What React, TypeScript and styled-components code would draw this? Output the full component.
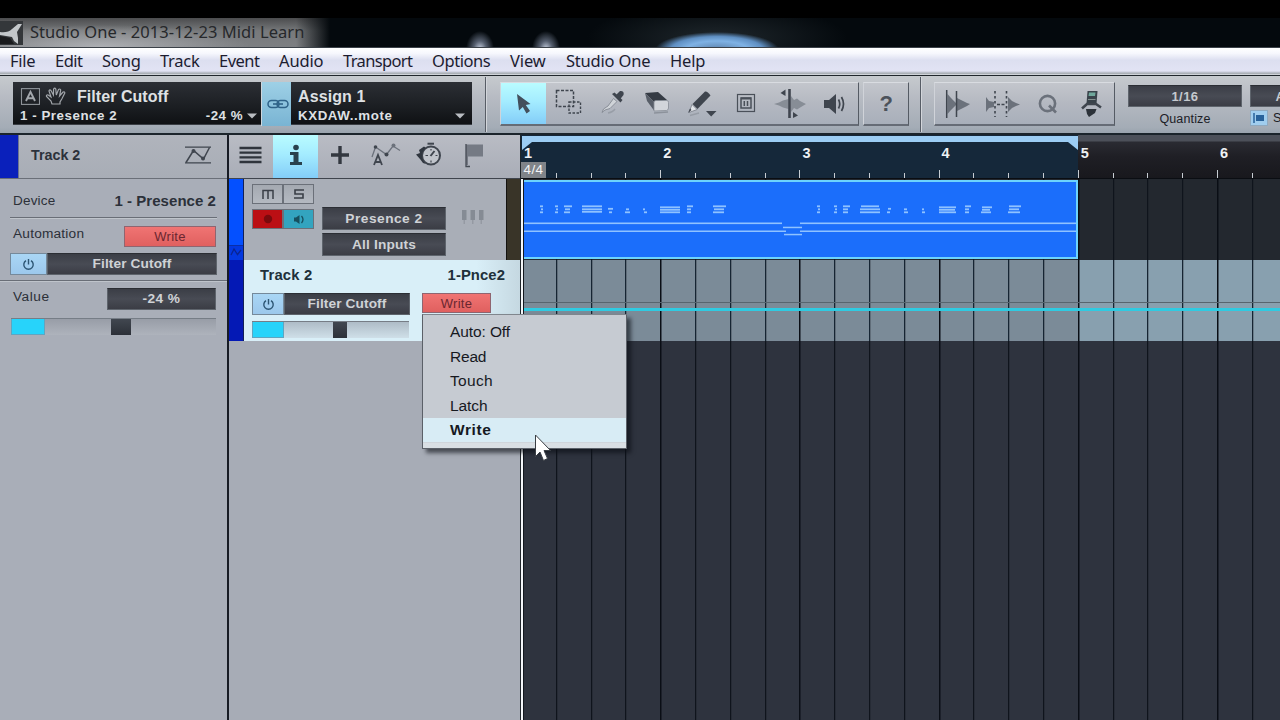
import React from "react";
import styled, { createGlobalStyle, css } from "styled-components";

const Global = createGlobalStyle`
  *, *::before, *::after { box-sizing: border-box; }
  html, body { margin: 0; padding: 0; background: #000; overflow: hidden; }
  body { font-family: "Liberation Sans", Arial, sans-serif; }
  svg { display: block; flex: none; }
`;

const BEAT = 34.8;

const Screen = styled.div`
  position: relative;
  width: 1280px;
  height: 720px;
  padding-top: 18px;
  display: flex;
  flex-direction: column;
  overflow: hidden;
  background: #000;
`;

const Label = styled.span<{ $size: number; $bold?: boolean; $color?: string; $track?: number; $raise?: number }>`
  font-size: ${(p) => p.$size}px;
  font-weight: ${(p) => (p.$bold ? 700 : 400)};
  color: ${(p) => p.$color ?? "#23282f"};
  letter-spacing: ${(p) => p.$track ?? 0}px;
  padding-bottom: ${(p) => p.$raise ?? 0}px;
  line-height: 1;
  white-space: nowrap;
`;

/* ---------- window title and menu ---------- */

const TitleBar = styled.header`
  height: 29px;
  flex: none;
  display: flex;
  align-items: center;
  background:
    radial-gradient(ellipse 14px 18px at 480px 31px, #c9d2e2 0%, rgba(140, 152, 175, 0.6) 45%, transparent 100%),
    radial-gradient(ellipse 14px 18px at 546px 31px, #c9d2e2 0%, rgba(140, 152, 175, 0.6) 45%, transparent 100%),
    radial-gradient(ellipse 62px 18px at 717px 32px, #5a7fa8 0%, #7fb2e4 50%, #5f8fc2 75%, transparent 100%),
    radial-gradient(ellipse 130px 34px at 717px 20px, #1f272c 0%, transparent 100%),
    linear-gradient(90deg, transparent 0 296px, #04090d 330px),
    linear-gradient(90deg, transparent 60%, rgba(30, 36, 38, 0.6) 100%),
    radial-gradient(ellipse 150px 22px at 100px 29px, rgba(190, 192, 196, 0.75), transparent 100%),
    linear-gradient(180deg, #4b4c4e 0%, #77797b 45%, #7d7f82 100%);
`;

const TitleText = styled.h1`
  margin: 0 0 0 7px;
  padding-bottom: 0;
  font: 400 16.5px/1 "Noto Sans", sans-serif;
  letter-spacing: 0.05px;
  color: #26282b;
  white-space: nowrap;
`;

const MenuBar = styled.nav`
  height: 29px;
  flex: none;
  display: flex;
  align-items: center;
  padding-left: 10px;
  padding-bottom: 1px;
  border-top: 1px solid #3b4148;
  border-bottom: 1px solid #20262b;
  background: linear-gradient(180deg, #fff 0%, #f6f7fd 20%, #dcdff0 45%, #e2e3f4 85%, #a6acb2 94%, #e2e5ea 100%);
`;

const MenuItem = styled.a<{ $w: number; $track: number }>`
  width: ${(p) => p.$w}px;
  margin-right: 20px;
  font: 400 16.5px/1 "Noto Sans", sans-serif;
  letter-spacing: ${(p) => p.$track}px;
  color: #1c1c30;
  white-space: nowrap;
`;

/* ---------- toolbar ---------- */

const ToolBar = styled.section`
  height: 59px;
  flex: none;
  display: flex;
  align-items: flex-start;
  padding: 6px 0 0 13px;
  border-bottom: 2px solid #1b242b;
  background: linear-gradient(180deg, #c6cace 0%, #b6bac2 40%, #a4acb6 90%, #9aa4ae 100%);
`;

const Display = styled.div<{ $w: number }>`
  width: ${(p) => p.$w}px;
  height: 43px;
  flex: none;
  padding: 6px 4px 0 7px;
  display: flex;
  flex-direction: column;
  gap: 4px;
  background: linear-gradient(180deg, #2c2f35 0%, #1b1e22 60%, #0f1114 100%);
  border-bottom: 1px solid #3a3e44;
`;

const DisplayRow = styled.div<{ $gap?: number; $tall?: boolean }>`
  height: ${(p) => (p.$tall ? 17 : 14)}px;
  display: flex;
  align-items: center;
  gap: ${(p) => p.$gap ?? 0}px;
`;

const Push = styled.span`
  flex: 1;
`;

const Space = styled.i<{ $w: number }>`
  width: ${(p) => p.$w}px;
  flex: none;
`;

const LinkButton = styled.button`
  width: 30px;
  height: 44px;
  flex: none;
  padding: 0 0 0 2px;
  border: 0;
  border-left: 1px solid #cfd6dc;
  display: flex;
  align-items: center;
  justify-content: center;
  background: linear-gradient(180deg, #9ed0e6, #79b4d3);
`;

const BarRule = styled.i<{ $l: number; $r: number }>`
  width: 2px;
  height: 55px;
  flex: none;
  margin: -5px ${(p) => p.$r}px 0 ${(p) => p.$l}px;
  border-left: 1px solid #575d66;
  border-right: 1px solid #d3d6db;
`;

const ToolGroup = styled.div<{ $w: number; $ml?: number }>`
  width: ${(p) => p.$w}px;
  height: 44px;
  margin-left: ${(p) => p.$ml ?? 0}px;
  flex: none;
  display: flex;
  border-top: 1px solid #d9dce1;
  border-left: 1px solid #d0d3d9;
  border-right: 1px solid #555b64;
  border-bottom: 2px solid #666c76;
  background: linear-gradient(180deg, #c3c6cc 0%, #b4b8c1 50%, #a8afba 100%);
`;

const Tool = styled.button<{ $active?: boolean; $w?: number; $lift?: number }>`
  width: ${(p) => p.$w ?? 44.4}px;
  flex: none;
  height: 100%;
  padding: 0 0 ${(p) => p.$lift ?? 0}px;
  border: 0;
  display: flex;
  align-items: center;
  justify-content: center;
  background: ${(p) => (p.$active ? "linear-gradient(180deg, #b9fcff 0%, #a4ecff 45%, #83cdf8 100%)" : "transparent")};
`;

const QuantizeBlock = styled.div`
  width: 114px;
  margin-left: 13px;
  flex: none;
  display: flex;
  flex-direction: column;
  align-items: center;
  gap: 6px;
  padding-top: 3px;
`;

const DarkField = styled.div<{ $w: number; $h: number }>`
  width: ${(p) => p.$w}px;
  height: ${(p) => p.$h}px;
  flex: none;
  display: flex;
  align-items: center;
  justify-content: center;
  border: 1px solid #5e646c;
  border-top-color: #2b2e34;
  background: linear-gradient(180deg, #3b3e46 0%, #484b54 50%, #3b3d45 100%);
`;

const SnapBlock = styled(QuantizeBlock)`
  width: 106px;
  margin-left: 8px;
  gap: 3px;
  align-items: flex-start;
`;

const SnapRow = styled.div`
  display: flex;
  align-items: center;
  gap: 5px;
`;

const SnapToggle = styled.i`
  width: 18px;
  height: 16px;
  display: flex;
  align-items: center;
  justify-content: center;
  border: 1px solid #8fa9bf;
  background: #a0cdee;
`;

/* ---------- body ---------- */

const Body = styled.main`
  flex: 1;
  display: flex;
  min-height: 0;
`;

const Inspector = styled.aside`
  width: 229px;
  flex: none;
  border-right: 2px solid #171b24;
  background: #a9aeb8;
`;

const InspectorHead = styled.div`
  height: 44px;
  display: flex;
  align-items: center;
  border-bottom: 1px solid #6a6f78;
  padding: 0 16px 3px 0;
  background: linear-gradient(90deg, #0a20bb 0 18px, #6e7590 18px 19px, transparent 19px), linear-gradient(180deg, #b0b4bc, #a8adb6);
`;

const InspectorRow = styled.div<{ $h: number; $left?: number; $lower?: number }>`
  height: ${(p) => p.$h}px;
  margin: 0 11px 0 ${(p) => p.$left ?? 13}px;
  padding-top: ${(p) => p.$lower ?? 0}px;
  display: flex;
  align-items: center;
  justify-content: space-between;
`;

const Rule = styled.hr<{ $inset?: number }>`
  height: 2px;
  margin: 0 ${(p) => p.$inset ?? 0}px;
  border: 0;
  background: linear-gradient(180deg, #696e77 50%, #bfc4cb 50%);
`;

const WriteButton = styled.button<{ $w: number; $h: number }>`
  width: ${(p) => p.$w}px;
  height: ${(p) => p.$h}px;
  padding: 0;
  display: flex;
  align-items: center;
  justify-content: center;
  border: 1px solid #8f6570;
  background: linear-gradient(180deg, #f07473, #e0605f);
`;

const ParamRow = styled.div<{ $ml: number }>`
  display: flex;
  margin-left: ${(p) => p.$ml}px;
`;

const PowerButton = styled.button<{ $w: number; $h: number }>`
  width: ${(p) => p.$w}px;
  height: ${(p) => p.$h}px;
  padding: 0;
  display: flex;
  align-items: center;
  justify-content: center;
  border: 1px solid #75899a;
  background: linear-gradient(180deg, #a9d6f5, #9cc8ec);
`;

const Slider = styled.div<{ $w: number; $h: number; $fill: number; $knob: number; $kw: number; $light?: boolean }>`
  width: ${(p) => p.$w}px;
  height: ${(p) => p.$h}px;
  display: flex;
  border-top: 1px solid #767d86;
  background: ${(p) => (p.$light ? "linear-gradient(180deg,#aebcc7,#cfdfe8)" : "linear-gradient(180deg,#989da7,#aeb3bc)")};
  &::before {
    content: "";
    width: ${(p) => p.$fill}px;
    background: #27d3fa;
    border: 1px solid #5fa5c0;
    border-top: 0;
  }
  &::after {
    content: "";
    width: ${(p) => p.$kw}px;
    margin-left: ${(p) => p.$knob - p.$fill}px;
    background: linear-gradient(180deg, #414750, #2c3038);
  }
`;

const TrackList = styled.section`
  width: 292px;
  flex: none;
  display: flex;
  flex-direction: column;
  border-right: 1px solid #20262b;
  background: #a7acb6;
`;

const TrackTools = styled.div`
  height: 44px;
  flex: none;
  display: flex;
  border-bottom: 1px solid #3f444d;
  background: linear-gradient(180deg, #b9bcc4, #a9adb7);
`;

const TrackRow = styled.div<{ $h: number; $selected?: boolean }>`
  height: ${(p) => p.$h}px;
  flex: none;
  display: flex;
  background: ${(p) => (p.$selected ? "linear-gradient(90deg, #d9eff8 85%, #c5d8e1)" : "#a9aeb7")};
`;

const TrackColor = styled.i<{ $dark?: boolean }>`
  width: 15px;
  flex: none;
  display: flex;
  align-items: flex-end;
  justify-content: center;
  padding-bottom: 3px;
  border-right: 1px solid #122058;
  background: ${(p) => (p.$dark ? "#0419b5" : "linear-gradient(180deg,#0450ff 0 66px,#0a2fa8 66px 67px,#0338e0 67px)")};
`;

const TrackOneBody = styled.div`
  flex: 1;
  padding: 5px 0 0 8px;
  display: flex;
`;

const Buttons = styled.div`
  width: 62px;
  display: grid;
  grid-template-columns: 31px 31px;
  grid-template-rows: 20px 20px;
  row-gap: 5px;
  height: 45px;
`;

const MiniButton = styled.button<{ $bg?: string }>`
  padding: 0;
  display: flex;
  align-items: center;
  justify-content: center;
  border: 1px solid #6b7079;
  background: ${(p) => p.$bg ?? "linear-gradient(180deg,#a4a9b1,#b4b9c1)"};
`;

const Routing = styled.div`
  margin: 23px 0 0 8px;
  display: flex;
  flex-direction: column;
  gap: 3px;
`;

const KeysSlot = styled.div`
  margin: 25px 21px 0 0;
`;

const Meter = styled.i`
  width: 14px;
  flex: none;
  border-left: 1px solid #14120f;
  background: #393428;
`;

const TrackTwoBody = styled.div`
  flex: 1;
  padding: 8px 8px 0 8px;
  display: flex;
  flex-direction: column;
`;

const TrackTwoLine = styled.div<{ $h: number }>`
  height: ${(p) => p.$h}px;
  display: flex;
  align-items: flex-start;
`;

const EditArea = styled.section`
  flex: 1;
  display: flex;
  flex-direction: column;
  overflow: hidden;
  background: #2e333e;
`;

const Ruler = styled.div`
  height: 44px;
  flex: none;
  display: flex;
  position: relative;
  border-bottom: 1px solid #0a0d12;
  background: linear-gradient(90deg, #15283a 0 557px, transparent 557px), linear-gradient(180deg, #4c5059 0 6px, #2a2b32 7px, #1f1f25 50%, #18181d 100%);
`;

const Loop = styled.div`
  position: absolute;
  left: 1px;
  top: 1px;
`;

const Signature = styled.span`
  position: absolute;
  left: 0;
  top: 27px;
  width: 25px;
  height: 16px;
  background: #808489;
  display: flex;
  align-items: center;
  justify-content: center;
`;

const RulerBeat = styled.div<{ $bar: boolean }>`
  width: ${BEAT}px;
  flex: none;
  display: flex;
  flex-direction: column;
  justify-content: space-between;
  padding: 11px 0 0 3px;
  position: relative;
  &::after {
    content: "";
    width: 1px;
    height: ${(p) => (p.$bar ? 8 : 5)}px;
    margin-left: -3px;
    background: #c7cdd3;
  }
`;

const Lane = styled.div<{ $kind: "clip" | "auto" | "rest" }>`
  display: flex;
  position: relative;
  flex: none;
  overflow: hidden;
  ${(p) =>
    p.$kind === "clip" &&
    css`
      height: 81px;
      background: #23282f;
    `}
  ${(p) =>
    p.$kind === "auto" &&
    css`
      height: 81px;
      background: linear-gradient(90deg, #7b8b98 0 557px, #88a0af 557px);
    `}
  ${(p) =>
    p.$kind === "rest" &&
    css`
      flex: 1;
      background: #2e333e;
    `}
`;

const GridBeat = styled.i<{ $bar: boolean; $soft?: boolean }>`
  width: ${BEAT}px;
  flex: none;
  border-left: 1px solid ${(p) => (p.$bar ? "#0a0e15" : p.$soft ? "#162533" : "#0f141c")};
  box-shadow: inset 1px 0 0 ${(p) => (p.$bar ? "rgba(10, 14, 21, 0.5)" : "rgba(15, 20, 28, 0.25)")};
`;

const Clip = styled.div`
  position: absolute;
  left: 1px;
  top: 1px;
  width: 556px;
  height: 79px;
  border: 2px solid #6dd3fc;
  border-left-width: 1px;
  background: #1b6efb;
`;

const Envelope = styled.div`
  position: absolute;
  left: 0;
  right: 0;
  top: 42px;
  height: 9px;
  border-top: 1px solid #57656f;
  border-bottom: 3px solid #2fcbe2;
`;

const Playhead = styled.i`
  position: absolute;
  left: 521px;
  top: 179px;
  width: 3px;
  bottom: 0;
  border-right: 1px solid #11161d;
  background: #f4f7fa;
`;

/* ---------- popup ---------- */

const Popup = styled.ul`
  position: absolute;
  left: 422px;
  top: 314px;
  width: 205px;
  height: 135px;
  margin: 0;
  padding: 4.5px 0 0;
  list-style: none;
  border: 1px solid #5b6068;
  border-top-color: #80868d;
  background: linear-gradient(180deg, #c6cbd2 0 127px, #d9dfe4 128px);
  box-shadow: 4px 4px 4px rgba(10, 14, 20, 0.6);
`;

const PopupItem = styled.li<{ $on?: boolean }>`
  height: 24.5px;
  display: flex;
  align-items: center;
  padding-left: 27px;
  background: ${(p) => (p.$on ? "#d8ecf5" : "transparent")};
`;

const Pointer = styled.div`
  position: absolute;
  left: 534px;
  top: 434px;
`;

/* ---------- icons ---------- */

const Ico = ({ w, h, children }: { w: number; h: number; children: React.ReactNode }) => (
  <svg width={w} height={h} viewBox={`0 0 ${w} ${h}`} fill="none">
    {children}
  </svg>
);

const INK = "#3f454e";
const SOFT = "#6b717b";

const AppIcon = () => (
  <Ico w={23} h={24}>
    <rect width="23" height="24" fill="#34373a" />
    <path d="M0 11 Q8 12 12 8 L18 3 L22 3 L17 11 L18 17 L18 23 L14 20 L12 16 L6 15 L0 14Z" fill="#c3c7ca" />
    <path d="M0 15 L10 17 L14 23 H0Z" fill="#1a1b1d" />
  </Ico>
);

const ReadIcon = () => (
  <Ico w={20} h={17}>
    <rect x="1.500" y=".6" width="18" height="15.800" stroke="#8f949a" strokeWidth="1.100" />
    <path d="M6 13 L10.500 3.800 L15 13M7.500 10.200H13.500" stroke="#a3a7ac" strokeWidth="1.900" />
  </Ico>
);

const HandIcon = () => (
  <Ico w={22} h={19}>
    <path
      d="M7 17 L6 14 L1.500 9.500 Q1 7.500 3.200 8 L6 10 L4 4 Q4.600 2 6 3.500 L8.400 8 L8.600 2 Q9.700 .3 10.800 2 L11.300 8 L13.500 2.500 Q15 1.300 15.700 3 L14.600 9 L18 5 Q20 4.300 19.800 6 L16.800 12 L15 15 V17Z"
      stroke="#a3a7ac"
      strokeWidth="1.200"
    />
  </Ico>
);

const LinkIcon = () => (
  <Ico w={22} h={12}>
    <rect x="1" y="2.500" width="11" height="7" rx="3.500" stroke="#2f6288" strokeWidth="1.500" />
    <rect x="10" y="2.500" width="11" height="7" rx="3.500" stroke="#2f6288" strokeWidth="1.500" />
    <path d="M6 6H16" stroke="#2f6288" strokeWidth="1.600" />
  </Ico>
);

const Caret = () => (
  <Ico w={10} h={6}>
    <path d="M0 .5H10L5 5.500Z" fill="#b9bdc2" />
  </Ico>
);

const ArrowTool = () => (
  <Ico w={18} h={22}>
    <path d="M2 1 L15.500 11 L10.800 12 L15 18 L11.500 20.500 L7.800 14 L4 17.500Z" fill="#434f5c" />
  </Ico>
);

const RangeTool = () => (
  <Ico w={27} h={30}>
    <rect x="1.500" y="1.500" width="17" height="16" stroke={INK} strokeWidth="1.500" strokeDasharray="3 1.500" />
    <rect x="14" y="13" width="11.500" height="11" stroke={INK} strokeWidth="1.400" strokeDasharray="2.500 1.500" />
  </Ico>
);

const PickTool = () => (
  <Ico w={24} h={28}>
    <path d="M11 4 L13.500 2.500 L21.500 10 L19.500 12.500Z" fill={INK} />
    <path d="M14 6 L19 1 Q23.500 .5 22.500 5 L18.500 10Z" fill={INK} />
    <path d="M12.500 8.500 L16 11.500 L9 18.500 L4 20 L1 22.500 L2.500 19 L7 16Z" fill="#cfd3d8" stroke="#7c828b" strokeWidth=".8" />
    <path d="M7 23 Q12 22 14 19" stroke="#989ea7" strokeWidth="1.400" />
  </Ico>
);

const EraseTool = () => (
  <Ico w={26} h={25}>
    <path d="M1 2 L14 1 L23 9 L10 11Z" fill="#353b44" />
    <path d="M1 2 L10 11 V19.500 L3 10Z" fill="#585e68" />
    <path d="M10 11 Q10 9.500 12 9.500 H23 Q24.500 9.500 24.500 11.500 V17 Q24.500 19 22.500 19.500 L10 20Z" fill="#d2d5da" stroke="#858b94" strokeWidth=".8" />
    <path d="M10 22 L24 21" stroke="#8c929b" strokeWidth="1.600" />
  </Ico>
);

const PaintTool = () => (
  <Ico w={32} h={28}>
    <path d="M20 1.500 Q22.500 1 25.500 5.500 L12.500 19 L7.500 14Z" fill={INK} />
    <path d="M7 14.500 L12 19.500 L4 22.500Z" fill="#e1e4e8" stroke={SOFT} strokeWidth=".7" />
    <path d="M6.500 20 L3 23 L5 18.500Z" fill={INK} />
    <path d="M21 21H31.500L26.200 26.500Z" fill={INK} />
    <path d="M5 25.500 L14 23" stroke="#979da6" strokeWidth="1.500" />
  </Ico>
);

const MuteTool = () => (
  <Ico w={20} h={22}>
    <rect x="1.500" y="1.500" width="17" height="17" stroke="#4a5059" strokeWidth="1.200" />
    <path d="M5 15V5H15V15ZM8.300 13V8M11.500 13V8" stroke="#4a5059" strokeWidth="1.500" />
    <path d="M5 5.500H15" stroke="#4a5059" strokeWidth="2" />
  </Ico>
);

const BendTool = () => (
  <Ico w={32} h={32}>
    <path d="M0 16 L5 14.500 L9 12.500 L14.500 11 V21 L9 19.500 L5 17.500Z" fill="#878d96" />
    <path d="M17 8 L20 12 L23 10.500 L26 13 L32 16 L27 19 L23 21.500 L20 20 L17 24Z" fill="#878d96" />
    <path d="M15.500 1V30" stroke={INK} strokeWidth="2.600" />
    <path d="M11.500 1.500V8L6.500 5Z" fill={INK} />
    <path d="M19 24V30L24 27.500Z" fill={INK} />
  </Ico>
);

const ListenTool = () => (
  <Ico w={24} h={24}>
    <path d="M1 8H6L13 2V22L6 16H1Z" fill={INK} />
    <path d="M15.500 7.500Q18 12 15.500 16.500M18.500 5Q22.500 12 18.500 19" stroke={INK} strokeWidth="1.700" />
  </Ico>
);

const StripSilence = () => (
  <Ico w={26} h={30}>
    <path d="M2.500 5 L6 9 L11 14V16L6 21L2.500 25Z" fill={SOFT} />
    <path d="M12 9 L18 12 L22 14L25 15L22 17L18 19L12 22Z" fill={SOFT} />
    <path d="M1.700 1V29M11.500 2V28" stroke={INK} strokeWidth="1.500" />
  </Ico>
);

const GapTool = () => (
  <Ico w={34} h={28}>
    <path d="M0 7 L3 11 L8 12V17L3 18L0 22ZM22 7 L26 11 L30 13 L34 14.500 L30 16 L26 18 L22 22Z" fill={SOFT} />
    <path d="M9 1V27M20.500 1V27" stroke={INK} strokeWidth="1.600" strokeDasharray="2.500 2.500" />
    <path d="M11 14.500H19" stroke={INK} strokeWidth="1.400" strokeDasharray="3 1.500" />
  </Ico>
);

const QuantizeIcon = () => (
  <Ico w={20} h={20}>
    <circle cx="9.500" cy="9.500" r="7.600" stroke={SOFT} strokeWidth="2.600" />
    <path d="M11 11.500 L18 18.500" stroke={SOFT} strokeWidth="2.600" />
  </Ico>
);

const MacroIcon = () => (
  <Ico w={22} h={28}>
    <path d="M6.500 1H16.500L15.500 14H5.500Z" fill="#39424a" />
    <path d="M8 2.500H14.500L14 6H7.500Z" fill="#6fa79b" />
    <path d="M7 9.500H14.500" stroke="#84918f" />
    <path d="M1 18.500 L6 14 H15 L20 17.500" stroke={INK} strokeWidth="2.600" />
    <path d="M5 19 H15.500 L14 23 L8 27 L6 24Z" fill="#2c3239" />
  </Ico>
);

const EnvelopeIcon = () => (
  <Ico w={26} h={18}>
    <path d="M0 1.200H26M0 16.800H26" stroke={INK} strokeWidth="1.200" />
    <path d="M1 16.500 L8.500 4.500 L18.500 13 L24.500 1.500" stroke={INK} strokeWidth="1.500" />
    <circle cx="8.500" cy="5" r="2" fill={INK} />
    <circle cx="18" cy="12.500" r="2" fill={INK} />
  </Ico>
);

const PowerIcon = () => (
  <Ico w={13} h={13}>
    <path d="M4 2.600 A4.700 4.700 0 1 0 9 2.600M6.500 1V6.500" stroke="#2d5674" strokeWidth="1.400" />
  </Ico>
);

const ListIcon = () => (
  <Ico w={24} h={18}>
    <path d="M0.500 2H22.500M0.500 6.700H22.500M0.500 11.400H22.500M0.500 16H22.500" stroke="#2f343c" strokeWidth="2.300" />
  </Ico>
);

const InfoIcon = () => (
  <Ico w={16} h={22}>
    <circle cx="8" cy="3.500" r="2.800" fill="#29414d" />
    <path d="M2 8H10.500V18H14V21H2V18H5.500V11H2Z" fill="#29414d" />
  </Ico>
);

const PlusIcon = () => (
  <Ico w={20} h={20}>
    <path d="M10 1V19M1 10H19" stroke="#333840" strokeWidth="3.400" />
  </Ico>
);

const AutomationIcon = () => (
  <Ico w={30} h={24}>
    <path d="M1 14 L4.500 4 L15.500 11.500 L22 3 L29 7.500" stroke={SOFT} strokeWidth="1.300" />
    <circle cx="4.500" cy="4" r="1.800" fill={INK} />
    <circle cx="15.500" cy="11.500" r="2" fill={INK} />
    <circle cx="22.500" cy="2.500" r="2" fill={SOFT} />
    <path d="M3 22 L7 12 L11 22M4.500 19H9.500" stroke={INK} strokeWidth="1.800" />
  </Ico>
);

const TempoIcon = () => (
  <Ico w={28} h={26}>
    <circle cx="16" cy="13.500" r="9" stroke={INK} strokeWidth="2" fill="#c0c4cb" />
    <path d="M12.500 1.700H19" stroke={INK} strokeWidth="2" />
    <path d="M9 4.500 L4 8 L5 11 L1 12.500 L5 17 L8 21 L11 22 Q7 18 7 14 Q7 9 11 6Z" fill="#30363f" />
    <path d="M15.500 14L19.500 9" stroke={INK} strokeWidth="2" />
    <path d="M10.500 13.500H13M16 18.500V20.500M20.500 13.500H22.500M16 7V8.500" stroke={INK} strokeWidth="1.200" />
  </Ico>
);

const FlagIcon = () => (
  <Ico w={20} h={26}>
    <path d="M2 2.500H19V14.500H4V23H2Z" fill="#757a84" />
    <path d="M2 2V24.500H6" stroke="#454b54" strokeWidth="1.300" />
  </Ico>
);

const SpeakerIcon = () => (
  <Ico w={12} h={11}>
    <path d="M1 3.500H3L6.500 1V10L3 7.500H1Z" fill="#17505f" />
    <path d="M8.500 2Q11.500 5.500 8.500 9" stroke="#17505f" strokeWidth="1.300" />
  </Ico>
);

const KeysIcon = () => (
  <Ico w={24} h={18}>
    {[1, 9.500, 18].map((x) => (
      <g key={x}>
        <rect x={x} y="1" width="4.500" height="10" fill="#858b94" />
        <rect x={x + 1.500} y="11" width="1.500" height="4" fill="#959aa3" />
      </g>
    ))}
  </Ico>
);

const WaveMark = () => (
  <Ico w={12} h={10}>
    <path d="M1 8 L4 2 L7.500 7.500 L11 3" stroke="#0a2490" strokeWidth="1.300" />
  </Ico>
);

const CursorIcon = () => (
  <Ico w={20} h={30}>
    <path d="M1.500 1 V22.500 L6 18 L9.500 26.500 L13.500 24.500 L10 16.500 H16.500Z" fill="#fff" stroke="#3a3f45" strokeWidth="1" />
  </Ico>
);

/* ---------- clip contents ---------- */

type Note = [number, number, number];
const T = 205;
const M = 208;
const B = 211;
const NOTES: Note[] = [
  [540, T, 3], [541, M, 2], [540, B, 3],
  [555, T, 3], [556, M, 2], [555, B, 3],
  [564, T, 8], [565, M, 5], [564, B, 6],
  [582, T, 20], [582, M, 20], [582, B - 0.5, 20],
  [608, M - 0.5, 5], [609, B, 3],
  [626, M, 3], [625, B, 5],
  [643, M, 2], [644, B, 3],
  [660, 206, 20], [660, 208.5, 20], [660, B, 20],
  [687, T, 6], [687, M, 4], [687, B, 4],
  [713, T, 13], [714, M, 10], [713, B, 11],
];
const NOTES_2: Note[] = [
  [817, T, 3], [818, M, 2], [817, B, 3],
  [834, T, 3], [835, M, 2], [834, B, 3],
  [843, T, 7], [843, M, 5], [843, B, 5],
  [861, T, 18], [860, M, 20], [860, B, 20],
  [888, M - 0.5, 3], [887, B, 3],
  [904, M, 3], [904, B, 4],
  [922, M, 2], [922, B, 3],
  [939, 206, 17], [939, 208.5, 16], [939, B, 17],
  [965, T, 6], [965, M, 4], [965, B, 4],
  [982, 206, 10], [982, 208.5, 8], [981, B, 10],
  [1009, T, 12], [1009, M, 10], [1008, B, 12],
];

const ClipNotes = () => (
  <svg width="553" height="75" viewBox="523 181 553 75">
    <g fill="#8fc2ff">
      {[...NOTES, ...NOTES_2].map(([x, y, w], i) => (
        <rect key={i} x={x} y={y - 0.6} width={w} height="1.800" />
      ))}
      <rect x="523" y="221.500" width="259" height="1.600" />
      <rect x="800" y="221.500" width="277" height="1.600" />
      <rect x="523" y="229.500" width="263" height="1.500" />
      <rect x="800" y="229.500" width="277" height="1.500" />
      <rect x="783" y="225.700" width="19" height="1.500" />
      <rect x="784" y="232.800" width="18" height="1.500" />
    </g>
  </svg>
);

const MENUS: [string, number, number][] = [
  ["File", 25, -0.25], ["Edit", 27, -0.5], ["Song", 38, -0.2], ["Track", 39, -0.25], ["Event", 40, -0.5],
  ["Audio", 44, -0.15], ["Transport", 69, -0.65], ["Options", 58, -0.45], ["View", 36, -0.1],
  ["Studio One", 84, -0.2], ["Help", 36, -0.2],
];

const TOOLS = [RangeTool, PickTool, EraseTool, PaintTool, MuteTool, BendTool, ListenTool];
const BEATS = Array.from({ length: 22 }, (_, i) => i);
const MODES: [string, number][] = [["Auto: Off", -0.1], ["Read", -0.2], ["Touch", 0.3], ["Latch", -0.1], ["Write", 0.6]];

const Grid = ({ soft }: { soft?: boolean }) => (
  <>
    {BEATS.map((b) => (
      <GridBeat key={b} $bar={b % 4 === 0} $soft={soft} />
    ))}
  </>
);

export default function App() {
  return (
    <Screen>
      <Global />
      <TitleBar>
        <AppIcon />
        <TitleText>Studio One - 2013-12-23 Midi Learn</TitleText>
      </TitleBar>
      <MenuBar>
        {MENUS.map(([name, w, track]) => (
          <MenuItem key={name} $w={w} $track={track}>{name}</MenuItem>
        ))}
      </MenuBar>

      <ToolBar>
        <Display $w={248}>
          <DisplayRow $tall $gap={5}>
            <ReadIcon />
            <HandIcon />
            <Space $w={0} />
            <Label $size={16} $bold $color="#dfe1e4" $track={0.05}>Filter Cutoff</Label>
          </DisplayRow>
          <DisplayRow $gap={4}>
            <Label $size={13.3} $bold $color="#dfe1e4" $track={0.55}>1 - Presence 2</Label>
            <Push />
            <Label $size={13.3} $bold $color="#dfe1e4" $track={0.5}>-24 %</Label>
            <Caret />
          </DisplayRow>
        </Display>
        <LinkButton><LinkIcon /></LinkButton>
        <Display $w={181}>
          <DisplayRow $tall>
            <Label $size={16} $bold $color="#dfe1e4" $track={0.1}>Assign 1</Label>
          </DisplayRow>
          <DisplayRow>
            <Label $size={13.3} $bold $color="#dfe1e4" $track={0.6}>KXDAW..mote</Label>
            <Push />
            <Caret />
            <Space $w={3} />
          </DisplayRow>
        </Display>
        <BarRule $l={13} $r={13} />
        <ToolGroup $w={359}>
          <Tool $active $w={45}><ArrowTool /></Tool>
          {TOOLS.map((Icon, i) => (
            <Tool key={i}><Icon /></Tool>
          ))}
        </ToolGroup>
        <ToolGroup $w={46} $ml={4}>
          <Tool><Label $size={22} $bold $color="#4c525b">?</Label></Tool>
        </ToolGroup>
        <BarRule $l={11} $r={12} />
        <ToolGroup $w={181}>
          <Tool $w={45}><StripSilence /></Tool>
          <Tool $w={45}><GapTool /></Tool>
          <Tool $w={45}><QuantizeIcon /></Tool>
          <Tool><MacroIcon /></Tool>
        </ToolGroup>
        <QuantizeBlock>
          <DarkField $w={114} $h={22}><Label $size={13} $bold $color="#c5c9ce" $track={0.45}>1/16</Label></DarkField>
          <Label $size={12.5} $color="#1c2026" $track={0.15}>Quantize</Label>
        </QuantizeBlock>
        <SnapBlock>
          <DarkField $w={106} $h={22}><Label $size={13} $bold $color="#c5c9ce">Adaptive</Label></DarkField>
          <SnapRow>
            <SnapToggle>
              <Ico w={12} h={10}><path d="M1 0V10" stroke="#27619a" strokeWidth="1.500" /><rect x="3" y="2" width="8" height="6" fill="#27619a" /></Ico>
            </SnapToggle>
            <Label $size={12.5} $color="#1c2026">Snap</Label>
          </SnapRow>
        </SnapBlock>
      </ToolBar>

      <Body>
        <Inspector>
          <InspectorHead>
            <Space $w={31} />
            <Label $size={14.3} $bold $color="#2c313a">Track 2</Label>
            <Push />
            <EnvelopeIcon />
          </InspectorHead>
          <InspectorRow $h={38} $lower={5}>
            <Label $size={13.5} $color="#2c3038" $track={0.2}>Device</Label>
            <Label $size={15} $bold $color="#2c313a" $track={0.05}>1 - Presence 2</Label>
          </InspectorRow>
          <Rule $inset={10} />
          <InspectorRow $h={34}>
            <Label $size={13.7} $color="#2c3038" $track={0.2} $raise={4}>Automation</Label>
            <WriteButton $w={92} $h={21}><Label $size={13} $color="#6a2730" $track={0.25}>Write</Label></WriteButton>
          </InspectorRow>
          <ParamRow $ml={10}>
            <PowerButton $w={37} $h={22}><PowerIcon /></PowerButton>
            <DarkField $w={170} $h={22}><Label $size={13.7} $bold $color="#cfd2d6" $track={0.1}>Filter Cutoff</Label></DarkField>
          </ParamRow>
          <InspectorRow $h={5} />
          <Rule />
          <InspectorRow $h={34}>
            <Label $size={13.7} $color="#2c3038" $track={0.5} $raise={5}>Value</Label>
            <DarkField $w={109} $h={22}><Label $size={13.7} $bold $color="#cfd2d6" $track={0.4}>-24 %</Label></DarkField>
          </InspectorRow>
          <InspectorRow $h={21} $left={11}>
            <Slider $w={205} $h={17} $fill={34} $knob={100} $kw={20} />
          </InspectorRow>
        </Inspector>

        <TrackList>
          <TrackTools>
            <Tool $w={44} $lift={3}><ListIcon /></Tool>
            <Tool $active $w={45} $lift={4}><InfoIcon /></Tool>
            <Tool $w={43} $lift={4}><PlusIcon /></Tool>
            <Tool $w={50} $lift={4}><AutomationIcon /></Tool>
            <Tool $w={36} $lift={4}><TempoIcon /></Tool>
            <Tool $w={54} $lift={3}><FlagIcon /></Tool>
          </TrackTools>
          <TrackRow $h={81}>
            <TrackColor><WaveMark /></TrackColor>
            <TrackOneBody>
              <Buttons>
                <MiniButton><Ico w={12} h={10}><path d="M1 10V1.500H11V10M6 1.500V10" stroke="#3a3f47" strokeWidth="1.500" /></Ico></MiniButton>
                <MiniButton><Ico w={10} h={10}><path d="M10 1H1V5H9V9H0" stroke="#3a3f47" strokeWidth="1.600" /></Ico></MiniButton>
                <MiniButton $bg="#bb0f14"><Ico w={10} h={10}><circle cx="5" cy="5" r="4.200" fill="#7a0a0d" /></Ico></MiniButton>
                <MiniButton $bg="#33a4bf"><SpeakerIcon /></MiniButton>
              </Buttons>
              <Routing>
                <DarkField $w={124} $h={23}><Label $size={13.7} $bold $color="#cfd2d6" $track={0.5}>Presence 2</Label></DarkField>
                <DarkField $w={124} $h={23}><Label $size={13.7} $bold $color="#cfd2d6" $track={0.15}>All Inputs</Label></DarkField>
              </Routing>
              <Push />
              <KeysSlot><KeysIcon /></KeysSlot>
            </TrackOneBody>
            <Meter />
          </TrackRow>
          <TrackRow $h={81} $selected>
            <TrackColor $dark />
            <TrackTwoBody>
              <TrackTwoLine $h={25}>
                <Space $w={8} />
                <Label $size={14.8} $bold $color="#20303a" $track={0.2}>Track 2</Label>
                <Push />
                <Label $size={14.8} $bold $color="#20303a" $track={0.1}>1-Pnce2</Label>
                <Space $w={7} />
              </TrackTwoLine>
              <TrackTwoLine $h={28}>
                <PowerButton $w={32} $h={22}><PowerIcon /></PowerButton>
                <DarkField $w={126} $h={22}><Label $size={13.7} $bold $color="#cfd2d6" $track={0.1}>Filter Cutoff</Label></DarkField>
                <Push />
                <WriteButton $w={69} $h={20}><Label $size={13} $color="#6a2730" $track={0.25}>Write</Label></WriteButton>
                <Space $w={21} />
              </TrackTwoLine>
              <TrackTwoLine $h={17}>
                <Slider $w={157} $h={17} $fill={32} $knob={81} $kw={14} $light />
              </TrackTwoLine>
            </TrackTwoBody>
          </TrackRow>
        </TrackList>

        <EditArea>
          <Ruler>
            <Loop>
              <Ico w={557} h={14}>
                <path d="M0 0H556V14L546 6H10L0 14Z" fill="#9ccdf4" />
              </Ico>
            </Loop>
            {BEATS.map((b) => (
              <RulerBeat key={b} $bar={b % 4 === 0}>
                <Label $size={14.5} $bold $color="#eef1f4">{b % 4 === 0 ? b / 4 + 1 : ""}</Label>
              </RulerBeat>
            ))}
            <Signature><Label $size={13.5} $color="#f3f5f7" $track={0.4}>4/4</Label></Signature>
          </Ruler>
          <Lane $kind="clip">
            <Grid />
            <Clip><ClipNotes /></Clip>
          </Lane>
          <Lane $kind="auto">
            <Grid soft />
            <Envelope />
          </Lane>
          <Lane $kind="rest">
            <Grid />
          </Lane>
        </EditArea>
      </Body>

      <Playhead />
      <Popup>
        {MODES.map(([mode, track]) => (
          <PopupItem key={mode} $on={mode === "Write"}>
            <Label $size={15.5} $bold={mode === "Write"} $color="#16191f" $track={track}>{mode}</Label>
          </PopupItem>
        ))}
      </Popup>
      <Pointer><CursorIcon /></Pointer>
    </Screen>
  );
}
